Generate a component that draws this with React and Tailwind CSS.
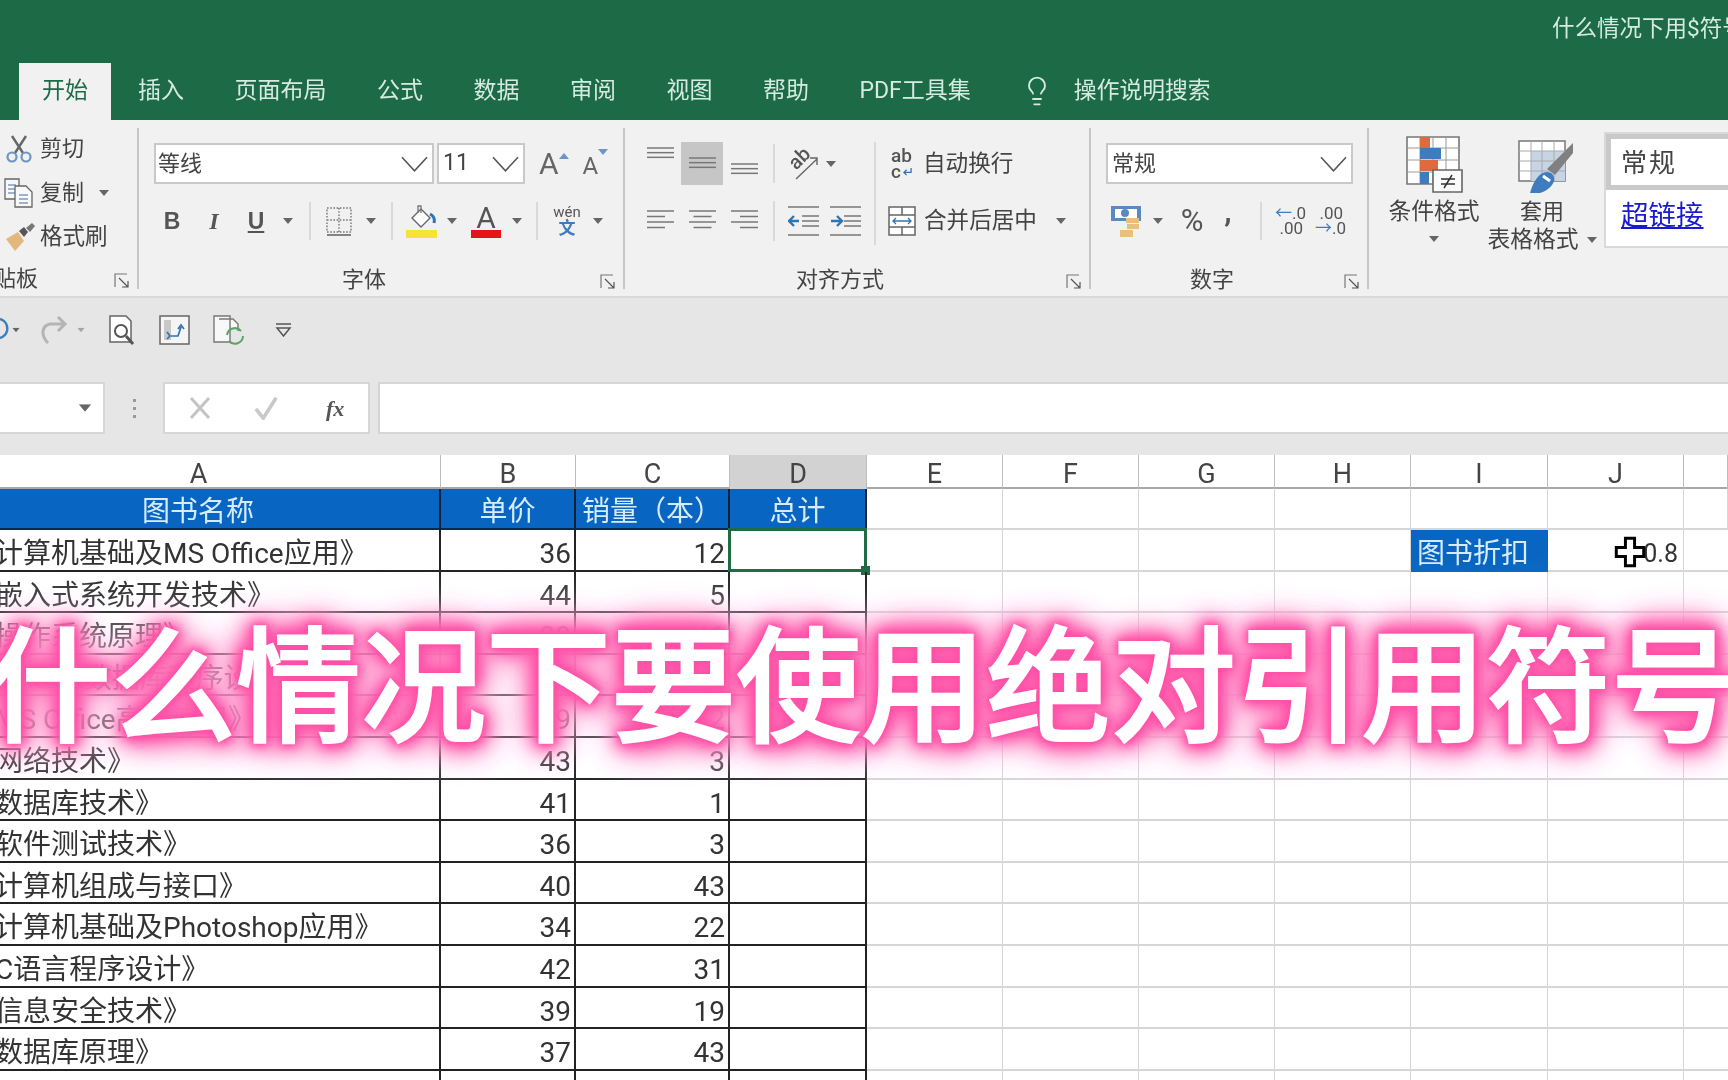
import React from 'react';
import { Lightbulb } from 'lucide-react';

const tabs = ['插入', '页面布局', '公式', '数据', '审阅', '视图', '帮助', 'PDF工具集'];

const books = [
  ['《计算机基础及MS Office应用》', '36', '12'],
  ['《嵌入式系统开发技术》', '44', '5'],
  ['《操作系统原理》', '28', '41'],
  ['《MySQL数据库程序设计》', '39', '22'],
  ['《MS Office高级应用》', '39', '32'],
  ['《网络技术》', '43', '3'],
  ['《数据库技术》', '41', '1'],
  ['《软件测试技术》', '36', '3'],
  ['《计算机组成与接口》', '40', '43'],
  ['《计算机基础及Photoshop应用》', '34', '22'],
  ['《C语言程序设计》', '42', '31'],
  ['《信息安全技术》', '39', '19'],
  ['《数据库原理》', '37', '43'],
  ['', '', ''],
];

const gridCols =
  'grid grid-cols-[441px_135px_154px_137px_136px_136px_136px_136px_137px_136px_1fr]';

// small dropdown triangle
function Caret({ className = '' }) {
  return (
    <svg viewBox="0 0 10 6" className={`h-[6px] w-[10px] shrink-0 ${className}`}>
      <path d="M0 0h10L5 6z" fill="#666" />
    </svg>
  );
}

function Chevron() {
  return (
    <svg viewBox="0 0 28 16" className="h-[16px] w-[27px] shrink-0" fill="none" stroke="#555" strokeWidth="1.6">
      <path d="M1 1l13 14L27 1" />
    </svg>
  );
}

function VSep({ className = '' }) {
  return <div className={`w-[2px] shrink-0 bg-[#d9d9d9] ${className}`} />;
}

function Launcher() {
  return (
    <svg viewBox="0 0 15 15" className="h-[15px] w-[15px]" fill="none" stroke="#777" strokeWidth="1.2">
      <path d="M1 14V1h12" />
      <path d="M5 5l9 9M14 8v6H8" stroke="#555" />
    </svg>
  );
}

function GroupLabel({ text }) {
  return (
    <div className="mt-auto grid h-[22px] grid-cols-[1fr_auto_1fr_34px] items-center pt-[2px] text-[22px] leading-[22px]">
      <div />
      <span className="whitespace-nowrap">{text}</span>
      <div />
      <div className="mr-[8px] flex justify-end pt-[2px]">
        <Launcher />
      </div>
    </div>
  );
}

function Lines({ y, widths, aligns = 'left', w = 27, h = 14 }) {
  // horizontal lines icon for the alignment buttons
  return (
    <svg viewBox={`0 0 ${w} ${h}`} style={{ width: w, height: h }} className="shrink-0" stroke="#777" strokeWidth="1.5">
      {widths.map((lw, i) => {
        const x = aligns === 'left' ? 0 : aligns === 'right' ? w - lw : (w - lw) / 2;
        return <line key={i} x1={x} x2={x + lw} y1={y + i * (h / widths.length)} y2={y + i * (h / widths.length)} />;
      })}
    </svg>
  );
}

function IndentIcon({ flip }) {
  return (
    <svg viewBox="0 0 31 30" className="h-[30px] w-[31px] shrink-0" fill="none" stroke="#777" strokeWidth="1.5">
      <path d="M0 1h31M0 29h31M14 10h17M14 15h17M14 20h17" />
      {flip ? (
        <path d="M1 15h10M7 10l5 5-5 5" stroke="#2f75b5" strokeWidth="2.4" />
      ) : (
        <path d="M11 15H2M6 10l-5 5 5 5" stroke="#2f75b5" strokeWidth="2.4" />
      )}
    </svg>
  );
}

function ScissorsIcon() {
  return (
    <svg viewBox="0 0 28 28" className="h-[28px] w-[28px] shrink-0" fill="none">
      <path d="M7 1l11 17M21 1L10 18" stroke="#666" strokeWidth="2.4" />
      <circle cx="7" cy="22" r="4.5" stroke="#6d95c4" strokeWidth="2.2" />
      <circle cx="21" cy="22" r="4.5" stroke="#6d95c4" strokeWidth="2.2" />
    </svg>
  );
}

function CopyIcon() {
  return (
    <svg viewBox="0 0 30 30" className="h-[30px] w-[30px] shrink-0" fill="#f8f8f8" stroke="#666" strokeWidth="1.3">
      <path d="M1 1h14v20H1z" />
      <path d="M4 7h8M4 11h8M4 15h8" stroke="#7a9cc6" />
      <path d="M11 8h11l6 6v15H11z" />
      <path d="M15 17h9M15 21h9M15 25h9" stroke="#7a9cc6" />
    </svg>
  );
}

function BrushIcon() {
  return (
    <svg viewBox="0 0 32 30" className="h-[30px] w-[32px] shrink-0">
      <path d="M2 17l12-7 6 9-9 10z" fill="#e4b77c" />
      <path d="M15 9l5-4 4 5-4 5z" fill="#555" />
      <path d="M22 6l6-5 3 3-5 6z" fill="#777" />
    </svg>
  );
}

function BorderIcon() {
  return (
    <svg viewBox="0 0 26 30" className="h-[30px] w-[26px] shrink-0" fill="none" stroke="#777" strokeWidth="1.4">
      <path d="M1 2h24v24H1zM13 2v24M1 14h24" strokeDasharray="1.6 1.6" />
      <path d="M1 29h24" strokeWidth="1.8" />
    </svg>
  );
}

function FillIcon() {
  return (
    <div className="flex w-[31px] shrink-0 flex-col items-center">
      <svg viewBox="0 0 31 26" className="h-[26px] w-[31px]" fill="none">
        <path d="M6 14l9-9 9 9-9 9z" fill="#fff" stroke="#666" strokeWidth="1.4" />
        <path d="M12 9V2h3v7" stroke="#777" strokeWidth="1.3" />
        <path d="M24 10c4 2 5 5 4 9" stroke="#2f75b5" strokeWidth="3" />
      </svg>
      <div className="h-[8px] w-full bg-[#f6e33a]" />
    </div>
  );
}

function OrientationIcon() {
  return (
    <div className="relative h-[32px] w-[31px] shrink-0">
      <span className="absolute top-[-1px] left-[0px] -rotate-45 text-[20px] leading-[22px] font-medium text-[#555]">ab</span>
      <svg viewBox="0 0 31 32" className="absolute inset-0 h-[32px] w-[31px]" fill="none" stroke="#666" strokeWidth="1.4">
        <path d="M8 31L29 11M22 10h7v7" />
      </svg>
    </div>
  );
}

function WrapIcon() {
  return (
    <div className="flex h-[32px] w-[24px] shrink-0 flex-col text-[19px] leading-[16px] font-medium text-[#555]">
      <span>ab</span>
      <span className="flex items-center">
        c
        <svg viewBox="0 0 10 10" className="ml-[2px] h-[9px] w-[9px]" fill="none" stroke="#2f75b5" strokeWidth="1.4">
          <path d="M9 1v5H2M4 3L1 6l3 3" />
        </svg>
      </span>
    </div>
  );
}

function MergeIcon() {
  return (
    <svg viewBox="0 0 28 30" className="h-[30px] w-[28px] shrink-0" fill="#fff" stroke="#666" strokeWidth="1.5">
      <path d="M1 1h26v28H1zM1 9h26M1 21h26M14 1v8M14 21v8" />
      <path d="M5 15h18M8 12l-3 3 3 3M20 12l3 3-3 3" fill="none" stroke="#2f75b5" strokeWidth="1.3" />
    </svg>
  );
}

function CurrencyIcon() {
  return (
    <svg viewBox="0 0 31 33" className="h-[33px] w-[31px] shrink-0">
      <path d="M0 1h30v15H0z" fill="#5b8ac0" />
      <path d="M4 4h22v9H4z" fill="#fff" />
      <circle cx="14" cy="8" r="4" fill="#5b8ac0" />
      <path d="M15 13h13v5H15zM16 19h12v5H16zM9 25h13v7H9z" fill="#e9bf7f" />
    </svg>
  );
}

function CondFormatIcon() {
  return (
    <svg viewBox="0 0 57 57" className="h-[57px] w-[57px]" fill="none">
      <path d="M1 1h52v47H1z" fill="#fff" stroke="#777" strokeWidth="1.6" />
      <path d="M1 12h52M1 24h52M1 36h52M14 1v47M27 1v47M40 1v47" stroke="#999" strokeWidth="1" />
      <path d="M14 12h10V1H14z" fill="#dd6b3d" />
      <path d="M14 23h21V12H14z" fill="#3f7cbf" />
      <path d="M14 35h18V24H14z" fill="#dd6b3d" />
      <path d="M14 48h9V36h-9z" fill="#3f7cbf" />
      <path d="M27 34h29v22H27z" fill="#fafafa" stroke="#666" strokeWidth="1.6" />
      <path d="M35 43h14M35 48h14M38 52l8-13" stroke="#333" strokeWidth="1.5" />
    </svg>
  );
}

function TableStyleIcon() {
  return (
    <svg viewBox="0 0 55 53" className="ml-[6px] h-[53px] w-[55px]" fill="none">
      <path d="M1 1h46v40H1z" fill="#fff" stroke="#777" strokeWidth="1.5" />
      <path d="M13 11h34v30H13z" fill="#c6d4e3" />
      <path d="M1 11h46M1 21h46M1 31h46M13 1v40M24 1v40M36 1v40" stroke="#aaa" strokeWidth="1" />
      <path d="M29 29L50 8l5-5v10L37 35z" fill="#808080" />
      <path d="M12 53c3-11 9-21 17-21 5 0 8 4 7 9-2 6-8 10-14 12z" fill="#3f7cbf" />
      <path d="M25 36l7 5" stroke="#fff" strokeWidth="3" />
    </svg>
  );
}

function Sheet() {
  return (
    <div>
      <div className={`${gridCols} h-[34px] border-b-2 border-[#a8a8a8] text-[27px] leading-[38px] text-[#444]`}>
        {['A', 'B', 'C', 'D', 'E', 'F', 'G', 'H', 'I', 'J', ''].map((c, i) => (
          <div key={i} className={`border-r border-[#bdbdbd] text-center ${c === 'A' ? 'pr-[43px]' : ''} ${c === 'D' ? 'bg-[#d2d2d2]' : ''}`}>
            {c}
          </div>
        ))}
      </div>

      <div className={`${gridCols} h-[41px] grid-rows-[41px] text-[28px] leading-[45px] text-[#d7ecfb]`}>
        {['图书名称', '单价', '销量（本）', '总计'].map((c, i) => (
          <div key={c} className={`border-r-2 border-b-2 border-r-[#123] border-b-[#0b2a4e] bg-[#0866c2] text-center whitespace-nowrap ${i === 0 ? 'pr-[43px]' : ''}`}>
            {c}
          </div>
        ))}
        {[0, 1, 2, 3, 4, 5, 6].map((i) => (
          <div key={i} className="border-r border-b-2 border-[#d6d6d6] bg-white" />
        ))}
      </div>

      {books.map(([name, price, sold], row) => (
        <div key={row} className={`${gridCols} h-[41.6px] grid-rows-[41.6px] bg-white text-[28px] leading-[48px] text-[#333]`}>
          <div className="overflow-hidden border-r-2 border-b-2 border-[#222] whitespace-nowrap">
            <span className="-ml-[33px] block">{name}</span>
          </div>
          <div className="border-r-2 border-b-2 border-[#222] pr-[3px] text-right">{price}</div>
          <div className="border-r-2 border-b-2 border-[#222] pr-[3px] text-right">{sold}</div>
          <div className="relative border-r-2 border-b-2 border-[#222]">
            {row === 0 && (
              <div className="absolute -top-[2px] -right-[2px] -bottom-[2px] -left-[2px] border-[3px] border-[#1f6b46]">
                <div className="absolute -right-[6px] -bottom-[6px] h-[9px] w-[9px] bg-[#1f6b46]" />
              </div>
            )}
          </div>
          {[0, 1, 2, 3].map((i) => (
            <div key={i} className="border-r border-b-2 border-[#d6d6d6]" />
          ))}
          {row === 0 ? (
            <div className="border-r border-b-2 border-[#0866c2] bg-[#0866c2] pl-[6px] text-[#d7ecfb]">图书折扣</div>
          ) : (
            <div className="border-r border-b-2 border-[#d6d6d6]" />
          )}
          <div className="relative border-r border-b-2 border-[#d6d6d6] pr-[5px] text-right text-[25px]">
            {row === 0 && (
              <>
                0.8
                <svg viewBox="0 0 28 28" className="absolute top-[6px] left-[66px] h-[32px] w-[32px]" fill="#fff" stroke="#000" strokeWidth="2.6">
                  <path d="M10 2h8v8h8v8h-8v8h-8v-8H2v-8h8z" />
                </svg>
              </>
            )}
          </div>
          <div className="border-b-2 border-[#d6d6d6]" />
        </div>
      ))}
    </div>
  );
}

export default function App() {
  return (
    <div className="relative h-[1080px] w-[1728px] overflow-hidden bg-white font-[Roboto,'Noto_Sans_CJK_SC',sans-serif] text-[#444] blur-[0.5px]">
      {/* title bar and tabs */}
      <div className="h-[120px] bg-[#1c6a46] text-[#d5ebdf]">
        <div className="flex h-[63px] justify-end pt-[14px]">
          <div className="w-[176px] overflow-hidden text-[22.5px] leading-[28px] whitespace-nowrap">什么情况下用$符号</div>
        </div>
        <div className="flex h-[57px] items-stretch pl-[19px] text-[23px]">
          <div className="flex w-[92px] items-center justify-center bg-[#f1f1f1] pb-[1px] text-[#1c6a46]">开始</div>
          <div className="ml-[27px] flex items-center gap-[50.5px] pb-[1px]">
            {tabs.map((t) => (
              <span key={t}>{t}</span>
            ))}
          </div>
          <div className="ml-[50px] flex items-center pb-[1px]">
            <Lightbulb className="h-[32px] w-[32px]" strokeWidth={1.4} />
            <span className="ml-[21px] text-[22.8px]">操作说明搜索</span>
          </div>
        </div>
      </div>

      {/* ribbon */}
      <div className="flex h-[178px] border-b-2 border-[#d9d9d9] bg-[#f1f1f1] pt-[8px] text-[22px] text-[#444]">
        <div className="flex h-[161px] w-[139px] shrink-0 flex-col border-r-2 border-[#c6c6c6]">
          <div className="flex h-[41px] items-center pl-[5px]">
            <ScissorsIcon />
            <span className="ml-[7px]">剪切</span>
          </div>
          <div className="mt-[3px] flex h-[41px] items-center pl-[4px]">
            <CopyIcon />
            <span className="ml-[6px]">复制</span>
            <Caret className="ml-[15px]" />
          </div>
          <div className="mt-[3px] flex h-[41px] items-center pl-[4px]">
            <BrushIcon />
            <span className="ml-[4px] text-[22.5px]">格式刷</span>
          </div>
          <div className="mt-auto flex h-[22px] items-center justify-between pt-[2px] leading-[22px]">
            <span className="-ml-[28px] whitespace-nowrap">粘贴板</span>
            <div className="mr-[8px] pt-[2px]">
              <Launcher />
            </div>
          </div>
        </div>

        <div className="flex h-[161px] w-[486px] shrink-0 flex-col border-r-2 border-[#c6c6c6] pt-[15px]">
          <div className="flex items-center">
            <div className="ml-[15px] flex h-[41px] w-[280px] items-center justify-between border-2 border-[#c9c9c9] bg-white pr-[4px] pl-[2px]">
              <span>等线</span>
              <Chevron />
            </div>
            <div className="ml-[3px] flex h-[41px] w-[88px] items-center justify-between border-2 border-[#c9c9c9] bg-white pr-[4px] pl-[4px]">
              <span className="text-[23px]">11</span>
              <Chevron />
            </div>
            <div className="ml-[14px] flex items-start">
              <span className="text-[30px] leading-[30px] text-[#666]">A</span>
              <svg viewBox="0 0 10 6" className="mt-[4px] h-[6px] w-[10px]"><path d="M0 6h10L5 0z" fill="#6d95c4" /></svg>
            </div>
            <div className="ml-[14px] flex items-start">
              <span className="mt-[4px] text-[24px] leading-[26px] text-[#666]">A</span>
              <svg viewBox="0 0 10 6" className="h-[6px] w-[10px]"><path d="M0 0h10L5 6z" fill="#6d95c4" /></svg>
            </div>
          </div>
          <div className="mt-[17px] flex h-[40px] items-center">
            <span className="ml-[19px] w-[28px] text-center font-[Liberation_Sans,sans-serif] text-[23px] font-bold text-[#555]">B</span>
            <span className="ml-[14px] w-[28px] text-center font-[Liberation_Serif,serif] text-[24px] font-bold text-[#555] italic">I</span>
            <span className="ml-[14px] w-[28px] text-center font-[Liberation_Sans,sans-serif] text-[23px] font-bold text-[#555] underline">U</span>
            <Caret className="ml-[13px]" />
            <VSep className="ml-[16px] h-[38px]" />
            <div className="ml-[15px]"><BorderIcon /></div>
            <Caret className="ml-[14px]" />
            <VSep className="ml-[15px] h-[38px]" />
            <div className="ml-[13px]"><FillIcon /></div>
            <Caret className="ml-[10px]" />
            <div className="ml-[14px] flex w-[30px] shrink-0 flex-col items-center">
              <span className="h-[26px] text-[30px] leading-[28px] text-[#555]">A</span>
              <div className="h-[8px] w-full bg-[#e3141b]" />
            </div>
            <Caret className="ml-[11px]" />
            <VSep className="ml-[14px] h-[38px]" />
            <div className="ml-[15px] flex w-[28px] shrink-0 flex-col items-center">
              <span className="text-[15px] leading-[15px] text-[#555]">wén</span>
              <span className="text-[17px] leading-[17px] font-bold text-[#3f7cbf]">文</span>
            </div>
            <Caret className="ml-[12px]" />
          </div>
          <GroupLabel text="字体" />
        </div>

        <div className="flex h-[161px] w-[466px] shrink-0 flex-col border-r-2 border-[#c6c6c6] pt-[14px]">
          <div className="flex">
            <div className="flex w-[249px] shrink-0 flex-col">
              <div className="flex h-[43px] items-stretch">
                <div className="ml-[14px] flex w-[42px] justify-center pt-[5px]">
                  <Lines y={1} widths={[27, 27, 27]} />
                </div>
                <div className="flex w-[42px] items-center justify-center bg-[#c6c6c6]">
                  <Lines y={1} widths={[27, 27, 27]} />
                </div>
                <div className="flex w-[42px] items-end justify-center pb-[8px]">
                  <Lines y={1} widths={[27, 27, 27]} />
                </div>
                <VSep className="ml-[8px] h-[39px] self-center" />
                <div className="ml-[13px] flex items-center"><OrientationIcon /></div>
                <Caret className="ml-[7px] self-center" />
              </div>
              <div className="mt-[16px] flex h-[40px] items-center">
                <div className="ml-[14px] flex w-[42px] justify-center">
                  <Lines y={1} widths={[27, 18, 27, 18]} h={22} />
                </div>
                <div className="flex w-[42px] justify-center">
                  <Lines y={1} widths={[27, 18, 27, 18]} aligns="center" h={22} />
                </div>
                <div className="flex w-[42px] justify-center">
                  <Lines y={1} widths={[27, 18, 27, 18]} aligns="right" h={22} />
                </div>
                <VSep className="ml-[8px] h-[40px]" />
                <div className="ml-[13px]"><IndentIcon /></div>
                <div className="ml-[11px]"><IndentIcon flip /></div>
              </div>
            </div>
            <VSep className="h-[103px]" />
            <div className="flex flex-col">
              <div className="ml-[15px] flex h-[43px] items-center">
                <WrapIcon />
                <span className="ml-[8px] text-[22.6px] whitespace-nowrap">自动换行</span>
              </div>
              <div className="mt-[16px] ml-[12px] flex h-[40px] items-center">
                <MergeIcon />
                <span className="ml-[8px] text-[22.6px] whitespace-nowrap">合并后居中</span>
                <Caret className="ml-[19px]" />
              </div>
            </div>
          </div>
          <GroupLabel text="对齐方式" />
        </div>

        <div className="flex h-[161px] w-[278px] shrink-0 flex-col border-r-2 border-[#c6c6c6] pt-[15px]">
          <div className="ml-[15px] flex h-[41px] w-[247px] items-center justify-between border-2 border-[#c9c9c9] bg-white pr-[4px] pl-[4px]">
            <span>常规</span>
            <Chevron />
          </div>
          <div className="mt-[17px] flex h-[40px] items-center">
            <div className="ml-[20px]"><CurrencyIcon /></div>
            <Caret className="ml-[11px]" />
            <span className="ml-[15px] w-[28px] text-center text-[31px] text-[#555]">%</span>
            <span className="ml-[17px] w-[10px] -translate-y-[10px] text-center text-[30px] font-bold text-[#555]">,</span>
            <VSep className="ml-[27px] h-[38px]" />
            <div className="ml-[13px] flex w-[28px] flex-col text-right text-[17px] leading-[15px] text-[#555]">
              <span><span className="text-[#3f7cbf]">←</span>.0</span>
              <span>.00</span>
            </div>
            <div className="ml-[12px] flex w-[28px] flex-col text-right text-[17px] leading-[15px] text-[#555]">
              <span>.00</span>
              <span><span className="text-[#3f7cbf]">→</span>.0</span>
            </div>
          </div>
          <GroupLabel text="数字" />
        </div>

        <div className="flex h-[161px] min-w-0 flex-1">
          <div className="ml-[11px] flex w-[108px] shrink-0 flex-col items-center pt-[8px]">
            <CondFormatIcon />
            <span className="mt-[6px] text-[22.8px] leading-[26px] whitespace-nowrap">条件格式</span>
            <Caret className="mt-[11px]" />
          </div>
          <div className="flex w-[108px] shrink-0 flex-col items-center pt-[12px]">
            <TableStyleIcon />
            <span className="mt-[6px] leading-[26px]">套用</span>
            <span className="mt-[1px] flex items-center text-[22.8px] leading-[28px] whitespace-nowrap">
              表格格式
              <Caret className="ml-[8px]" />
            </span>
          </div>
          <div className="mt-[4px] ml-[8px] h-[116px] flex-1 border-2 border-r-0 border-[#d9d9d9] bg-white">
            <div className="h-[56px] border-[5px] border-r-0 border-[#c9c9c9] bg-white pl-[10px] text-[26px] leading-[48px] tracking-[2px]">
              常规
            </div>
            <div className="pl-[15px] text-[27.5px] leading-[52px] text-[#1a1ad0] underline">超链接</div>
          </div>
        </div>
      </div>

      {/* quick access toolbar + formula bar */}
      <div className="bg-[#e6e6e6]">
        <div className="flex h-[84px] items-center pb-[20px]">
          <svg viewBox="0 0 12 26" className="h-[26px] w-[12px] shrink-0" fill="none" stroke="#3f7cbf" strokeWidth="2.5">
            <path d="M0 2c6 2 8 7 7 12-1 4-4 6-7 7" />
          </svg>
          <Caret className="ml-[-1px] scale-75" />
          <svg viewBox="0 0 30 28" className="ml-[17px] h-[28px] w-[30px] shrink-0" fill="none" stroke="#b4b4b4" strokeWidth="3">
            <path d="M10 27C3 20 3 10 12 8h14M20 1l7 7-7 7" />
          </svg>
          <Caret className="ml-[8px] scale-75 opacity-50" />
          <svg viewBox="0 0 30 30" className="ml-[22px] h-[30px] w-[30px] shrink-0" fill="#fff" stroke="#666" strokeWidth="1.5">
            <path d="M2 1h16l5 5v21H2z" />
            <circle cx="13" cy="16" r="6" stroke="#555" strokeWidth="2" />
            <path d="M18 21l7 8" stroke="#555" strokeWidth="3" />
          </svg>
          <svg viewBox="0 0 31 30" className="ml-[21px] h-[30px] w-[31px] shrink-0" fill="#f5f5f5" stroke="#666" strokeWidth="1.5">
            <path d="M1 1h29v28H1z" />
            <path d="M5 5h7v20H5z" fill="#c8c8c8" stroke="none" />
            <path d="M12 21h7l3-9M19 14l3-4 3 4M8 17l3 4-3 3" fill="none" stroke="#2f75b5" strokeWidth="1.7" />
          </svg>
          <svg viewBox="0 0 33 30" className="ml-[23px] h-[30px] w-[33px] shrink-0" fill="#f8f8f8" stroke="#777" strokeWidth="1.4">
            <path d="M1 1h16v26H1zM6 4h14l5 5v7" />
            <path d="M14 20a8 8 0 0 1 14-4M30 21a8 8 0 0 1-14 5" fill="none" stroke="#5aa469" strokeWidth="2" />
          </svg>
          <svg viewBox="0 0 17 14" className="ml-[29px] h-[14px] w-[17px] shrink-0" fill="none" stroke="#555" strokeWidth="1.5">
            <path d="M1 1h15M2 5l6.5 8L15 5z" />
          </svg>
        </div>
        <div className="flex h-[52px] items-stretch">
          <div className="flex w-[105px] items-center justify-end border-2 border-l-0 border-[#d6d6d6] bg-white pr-[13px]">
            <Caret className="scale-125" />
          </div>
          <div className="flex w-[58px] flex-col items-center justify-center gap-[5px]">
            <span className="h-[3px] w-[3px] bg-[#999]" />
            <span className="h-[3px] w-[3px] bg-[#999]" />
            <span className="h-[3px] w-[3px] bg-[#999]" />
          </div>
          <div className="flex w-[207px] items-center border-2 border-[#d6d6d6] bg-white">
            <svg viewBox="0 0 22 24" className="ml-[24px] h-[24px] w-[22px]" fill="none" stroke="#c4c4c4" strokeWidth="3">
              <path d="M2 2l18 20M20 2L2 22" />
            </svg>
            <svg viewBox="0 0 26 26" className="ml-[43px] h-[24px] w-[24px]" fill="none" stroke="#c9c9c9" strokeWidth="4">
              <path d="M2 14l8 10L24 2" />
            </svg>
            <span className="ml-[48px] font-[Liberation_Serif,serif] text-[22px] font-bold text-[#555] italic">fx</span>
          </div>
          <div className="ml-[8px] flex-1 border-2 border-r-0 border-[#d6d6d6] bg-white" />
        </div>
        <div className="h-[21px]" />
      </div>

      <Sheet />

      {/* big caption over the sheet */}
      <div className="absolute top-[600px] -left-[14px] font-['Noto_Sans_CJK_SC',sans-serif] text-[125px] leading-[156px] font-medium whitespace-nowrap text-white [-webkit-text-stroke:2px_white] [text-shadow:0_0_4px_#ff4fa6,0_0_8px_#ff4fa6,0_0_10px_#ff4fa6,0_0_14px_#ff55a9,0_0_18px_#ff5cac,0_0_20px_#ff5cac,0_0_24px_#ff62b0,0_0_28px_#ff6fb8,0_0_32px_#ff7cc0,0_0_36px_#ff8cc6,0_0_42px_#ffa6d2,0_0_48px_#ffbcdc,0_0_56px_#ffe0ee,0_0_70px_#fff]">
        什么情况下要使用绝对引用符号
      </div>
    </div>
  );
}
